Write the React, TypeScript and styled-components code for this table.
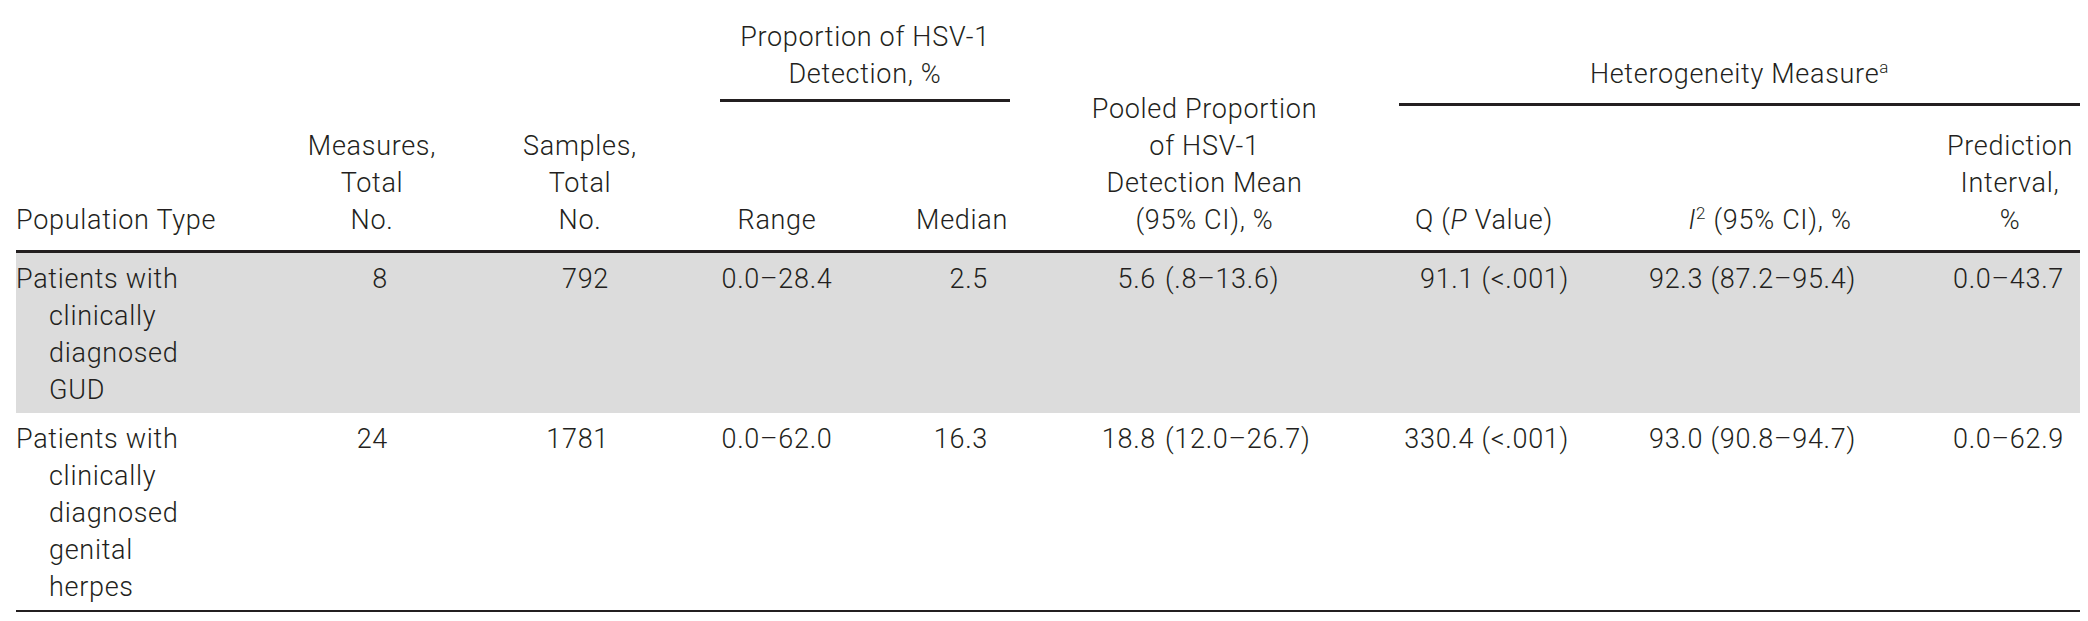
import React from "react";
import styled, { createGlobalStyle } from "styled-components";

type Align = "left" | "center" | "right";

interface CellProps {
  $align?: Align;
  $left?: number;
  $right?: number;
}

const INK = "#231f20";

const GlobalStyle = createGlobalStyle`
  body {
    margin: 0;
    background: #ffffff;
    font-family: Roboto, "Liberation Sans", Arial, sans-serif;
  }
`;

const Page = styled.div`
  padding: 19px 8px 0 16px;
`;

const Table = styled.table`
  width: 2064px;
  table-layout: fixed;
  border-collapse: separate;
  border-spacing: 0;
  font-size: 27px;
  font-weight: 300;
  line-height: 37px;
  letter-spacing: 0.7px;
  color: ${INK};

  tbody tr:last-child td {
    border-bottom: 2px solid ${INK};
  }
`;

const Col = styled.col<{ $width: number }>`
  width: ${(p) => p.$width}px;
`;

const HeadRow = styled.tr<{ $height?: number }>`
  height: ${(p) => (p.$height ? `${p.$height}px` : "auto")};
`;

// header cells spanning both header rows
const StackHead = styled.th<CellProps>`
  vertical-align: bottom;
  padding: 0 ${(p) => p.$right ?? 0}px 11px ${(p) => p.$left ?? 0}px;
  border-bottom: 3px solid ${INK};
  font-weight: inherit;
  text-align: ${(p) => p.$align ?? "center"};
  white-space: nowrap;
`;

const SpanHead = styled.th`
  vertical-align: bottom;
  padding: 0;
  font-weight: inherit;
`;

const SpanLabel = styled.div<{ $gap: number; $lift: number }>`
  padding-bottom: ${(p) => p.$gap}px;
  margin-bottom: ${(p) => p.$lift}px;
  border-bottom: 3px solid ${INK};
  text-align: center;
  white-space: nowrap;
`;

const SubHead = styled.th<CellProps>`
  vertical-align: bottom;
  padding: 0 ${(p) => p.$right ?? 0}px 11px ${(p) => p.$left ?? 0}px;
  border-bottom: 3px solid ${INK};
  font-weight: inherit;
  text-align: ${(p) => p.$align ?? "center"};
  white-space: nowrap;
`;

const Row = styled.tr<{ $shade?: boolean }>`
  background: ${(p) => (p.$shade ? "#dcdcdc" : "transparent")};
`;

const BodyCell = styled.td<CellProps>`
  vertical-align: top;
  padding: 8px ${(p) => p.$right ?? 0}px 4px ${(p) => p.$left ?? 0}px;
  text-align: ${(p) => p.$align ?? "left"};
  white-space: nowrap;
`;

const LabelCell = styled.td`
  vertical-align: top;
  padding: 8px 96px 4px 33px;
  text-indent: -33px;
`;

const Pair = styled.div`
  display: grid;
  grid-template-columns: 146px auto;
  column-gap: 9px;

  > span:first-child {
    text-align: right;
  }
`;

const Var = styled.i`
  font-style: italic;
`;

const Sup = styled.sup`
  font-size: 17px;
  line-height: 0;
  vertical-align: 10px;
`;

const widths = [284, 144, 276, 114, 176, 389, 170, 371, 140];

const rows = [
  {
    population: "Patients with clinically diagnosed GUD",
    measures: "8",
    samples: "792",
    range: "0.0–28.4",
    median: "2.5",
    pooled: ["5.6", "(.8–13.6)"],
    q: "91.1 (<.001)",
    i2: "92.3 (87.2–95.4)",
    prediction: "0.0–43.7",
    shade: true,
  },
  {
    population: "Patients with clinically diagnosed genital herpes",
    measures: "24",
    samples: "1781",
    range: "0.0–62.0",
    median: "16.3",
    pooled: ["18.8", "(12.0–26.7)"],
    q: "330.4 (<.001)",
    i2: "93.0 (90.8–94.7)",
    prediction: "0.0–62.9",
    shade: false,
  },
];

const App: React.FC = () => {
  return (
    <Page>
      <GlobalStyle />
      <Table>
        <colgroup>
          {widths.map((w, i) => (
            <Col key={i} $width={w} />
          ))}
        </colgroup>
        <thead>
          <HeadRow>
            <StackHead rowSpan={2} $align="left">
              Population Type
            </StackHead>
            <StackHead rowSpan={2}>
              Measures,
              <br />
              Total
              <br />
              No.
            </StackHead>
            <StackHead rowSpan={2} $right={4}>
              Samples,
              <br />
              Total
              <br />
              No.
            </StackHead>
            <SpanHead colSpan={2}>
              <SpanLabel $gap={6} $lift={4}>
                Proportion of HSV-1
                <br />
                Detection, %
              </SpanLabel>
            </SpanHead>
            <StackHead rowSpan={2}>
              Pooled Proportion
              <br />
              of HSV-1
              <br />
              Detection Mean
              <br />
              (95% CI), %
            </StackHead>
            <SpanHead colSpan={3}>
              <SpanLabel $gap={10} $lift={0}>
                Heterogeneity Measure<Sup>a</Sup>
              </SpanLabel>
            </SpanHead>
          </HeadRow>
          <HeadRow $height={147}>
            <SubHead>Range</SubHead>
            <SubHead $align="right" $right={2}>
              Median
            </SubHead>
            <SubHead>
              Q (<Var>P</Var> Value)
            </SubHead>
            <SubHead $left={31}>
              <Var>I</Var>
              <Sup>2</Sup> (95% CI), %
            </SubHead>
            <SubHead>
              Prediction
              <br />
              Interval,
              <br />%
            </SubHead>
          </HeadRow>
        </thead>
        <tbody>
          {rows.map((r) => (
            <Row key={r.population} $shade={r.shade}>
              <LabelCell>{r.population}</LabelCell>
              <BodyCell $align="right" $right={56}>
                {r.measures}
              </BodyCell>
              <BodyCell $align="right" $right={111}>
                {r.samples}
              </BodyCell>
              <BodyCell $align="center">{r.range}</BodyCell>
              <BodyCell $align="right" $right={22}>
                {r.median}
              </BodyCell>
              <BodyCell>
                <Pair>
                  <span>{r.pooled[0]}</span>
                  <span>{r.pooled[1]}</span>
                </Pair>
              </BodyCell>
              <BodyCell $align="right">{r.q}</BodyCell>
              <BodyCell $left={80}>{r.i2}</BodyCell>
              <BodyCell $align="right" $right={16}>
                {r.prediction}
              </BodyCell>
            </Row>
          ))}
        </tbody>
      </Table>
    </Page>
  );
};

export default App;
